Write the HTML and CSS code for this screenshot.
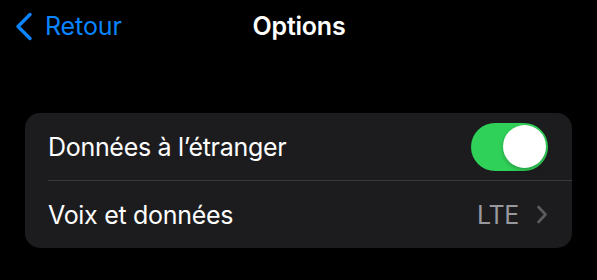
FILE: index.html
```html
<!DOCTYPE html>
<html lang="fr">
<head>
<meta charset="utf-8">
<link rel="stylesheet" href="styles.css">
</head>
<body>
<div class="screen">
  <header class="navbar">
    <a class="back">
      <svg class="back-icon" width="19" height="29" viewBox="0 0 19 29"><path d="M16 2.5 L4 14.5 L16 26.5" fill="none" stroke="#0a84ff" stroke-width="3.4" stroke-linecap="round" stroke-linejoin="round"/></svg>
      <span class="back-label">Retour</span>
    </a>
    <h1 class="title">Options</h1>
  </header>
  <section class="group">
    <div class="row">
      <span class="row-label">Données à l’étranger</span>
      <span class="toggle on"><span class="knob"></span></span>
    </div>
    <div class="row">
      <span class="row-label">Voix et données</span>
      <span class="row-detail">LTE
        <svg class="chevron" width="12" height="19" viewBox="0 0 12 19"><path d="M2.5 2 L9.5 9.5 L2.5 17" fill="none" stroke="#5b5b60" stroke-width="2.6" stroke-linecap="round" stroke-linejoin="round"/></svg>
      </span>
    </div>
  </section>
</div>
</body>
</html>
```
FILE: styles.css
```css
html, body {
  margin: 0;
  padding: 0;
  background: #000;
}
body {
  font-family: Inter, "Noto Sans", "Liberation Sans", sans-serif;
  color: #fff;
  width: 597px;
  height: 280px;
  overflow: hidden;
}
.screen {
  display: flex;
  flex-direction: column;
}
.navbar {
  position: relative;
  height: 52px;
  display: flex;
  align-items: center;
  justify-content: center;
}
.back {
  position: absolute;
  left: 14px;
  top: 11px;
  display: flex;
  align-items: center;
  gap: 12px;
  color: #0a84ff;
  font-size: 25px;
  line-height: 30px;
}
.back-icon {
  display: block;
}
.back-label {
  letter-spacing: -0.1px;
}
.title {
  margin: 0;
  font-size: 25px;
  font-weight: 600;
  line-height: 30px;
  margin-top: -1px;
  margin-left: 1px;
  letter-spacing: -0.2px;
}
.group {
  margin: 61px 25px 0;
  background: #1c1c1e;
  border-radius: 15px;
  padding-left: 23px;
}
.row {
  height: 67px;
  display: flex;
  align-items: center;
  justify-content: space-between;
  padding-right: 24px;
}
.row + .row {
  border-top: 1px solid #38383a;
}
.row-label {
  font-size: 25px;
  letter-spacing: -0.3px;
}
.toggle {
  width: 77px;
  height: 48px;
  border-radius: 24px;
  background: #30d158;
  display: flex;
  align-items: center;
  justify-content: flex-end;
  padding: 0 2px;
  box-sizing: border-box;
}
.knob {
  width: 43px;
  height: 43px;
  border-radius: 50%;
  background: #fff;
  box-shadow: 0 2px 4px rgba(0,0,0,0.25);
}
.row-detail {
  display: flex;
  align-items: center;
  gap: 17px;
  color: #98989f;
  font-size: 25px;
  letter-spacing: -0.3px;
}
.chevron {
  display: block;
}
```
